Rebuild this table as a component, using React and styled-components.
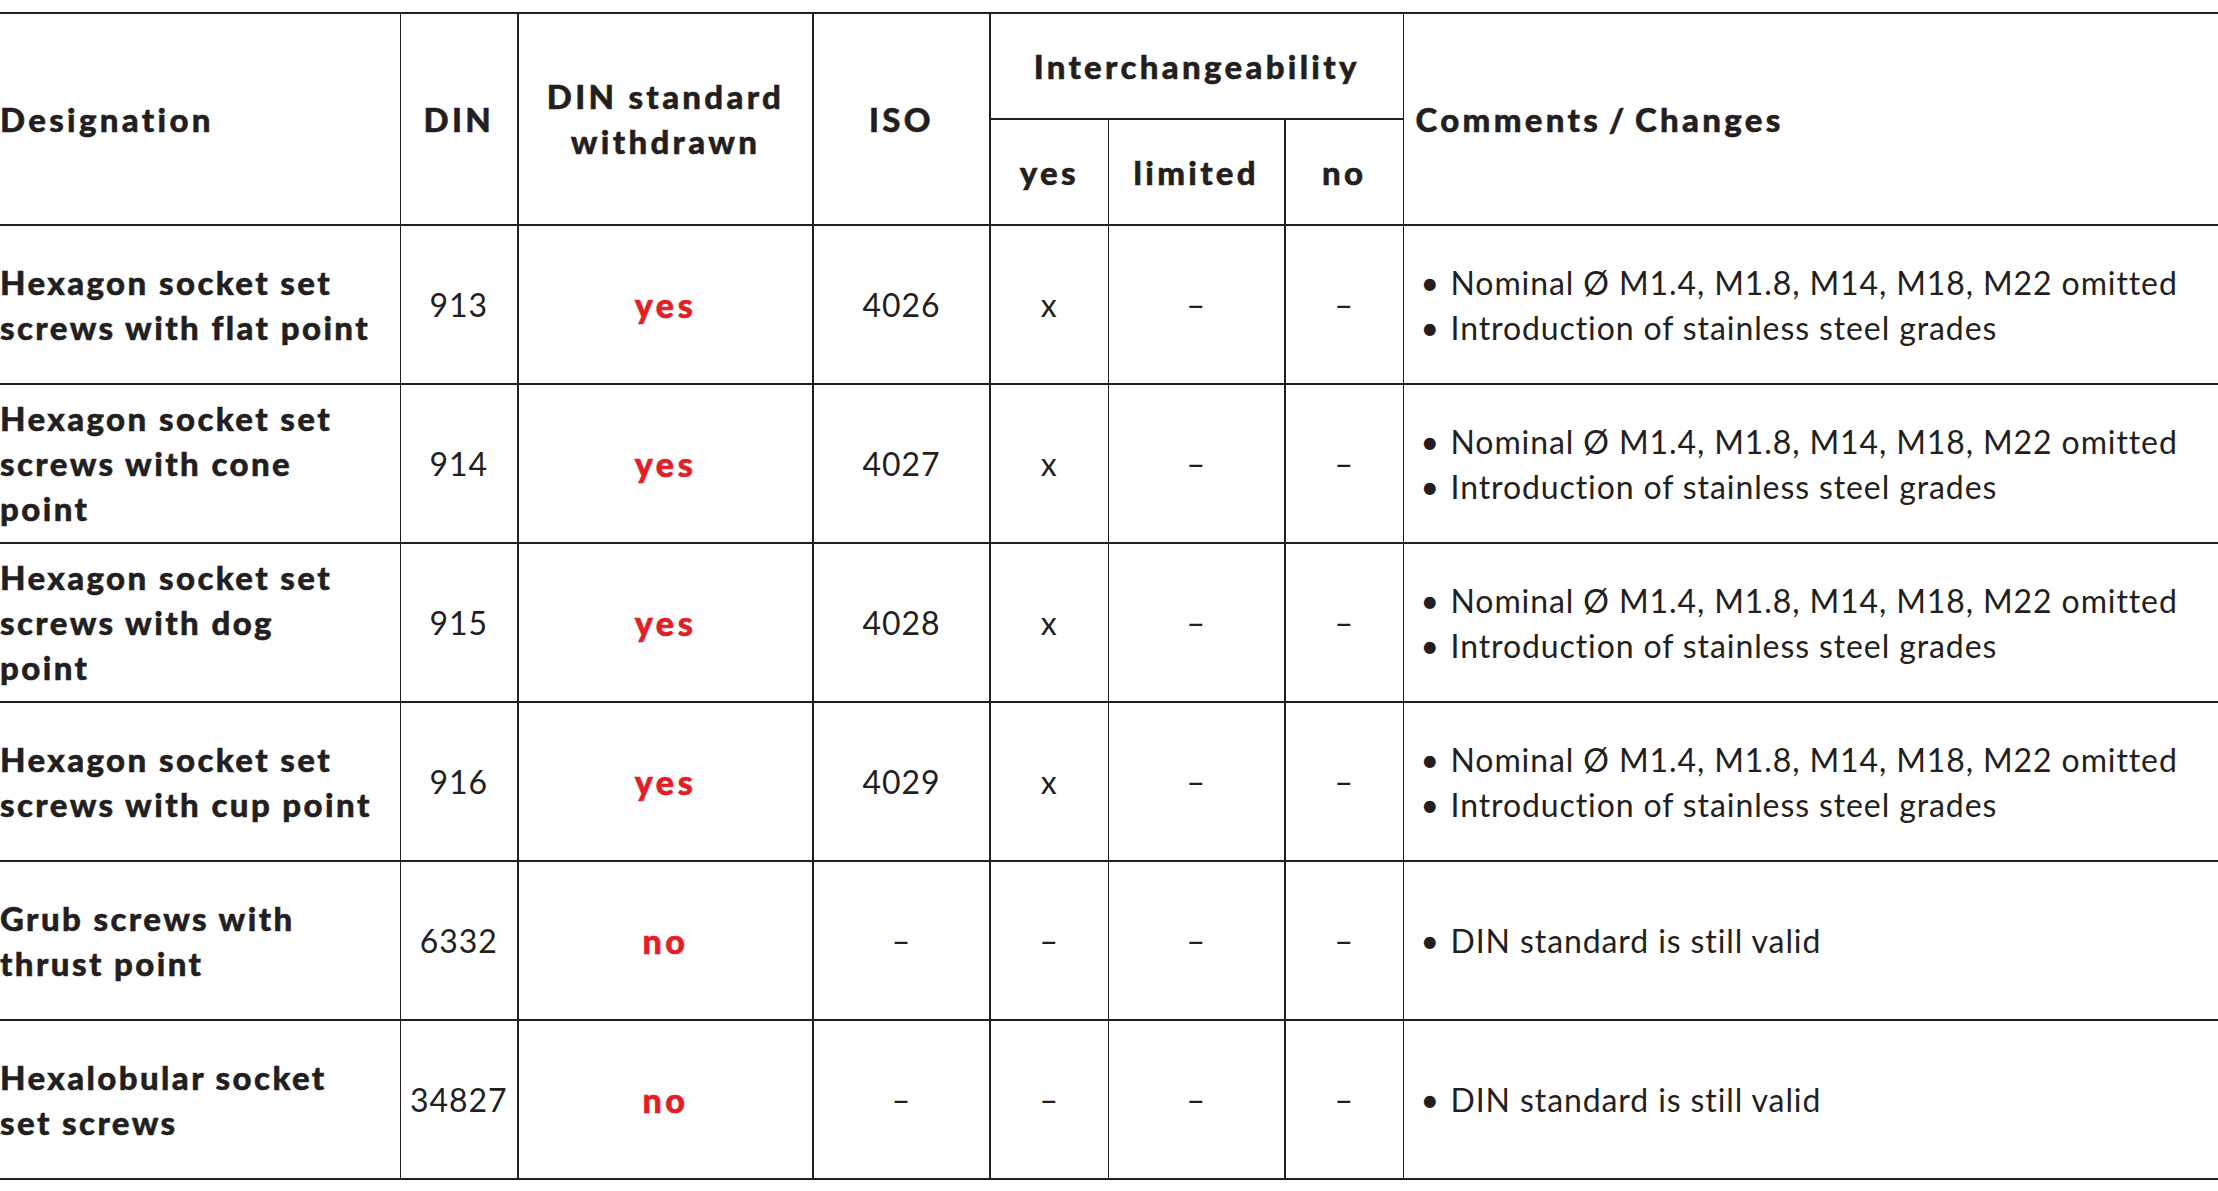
import React from 'react';
import styled, { createGlobalStyle } from 'styled-components';

const GlobalStyle = createGlobalStyle`
  html, body {
    margin: 0;
    padding: 0;
    background: #ffffff;
  }
  body {
    font-family: 'Lato', 'Noto Sans', sans-serif;
    color: #231f20;
  }
`;

const Page = styled.div`
  padding-top: 12px;
  width: 2218px;
`;

const Table = styled.table`
  width: 2218px;
  border-collapse: collapse;
  table-layout: fixed;
  border-top: 2px solid #231f20;
`;

const HeadRow = styled.tr`
  height: 106px;
`;

const BodyRow = styled.tr`
  height: 159px;
`;

const Th = styled.th`
  font-family: 'Lato', 'Noto Sans', sans-serif;
  font-weight: 900;
  font-size: 33px;
  letter-spacing: 3.3px;
  line-height: 45px;
  -webkit-text-stroke: 0.5px currentColor;
  color: #231f20;
  text-align: ${(p) => p.$align || 'center'};
  vertical-align: middle;
  padding: ${(p) => p.$pad || '0'};
  border-left: ${(p) => (p.$left ? `${p.$left}px solid #231f20` : 'none')};
  border-bottom: 2px solid #231f20;
`;

const Td = styled.td`
  font-family: 'Lato', 'Noto Sans', sans-serif;
  font-weight: 400;
  font-size: 32px;
  letter-spacing: 0.9px;
  line-height: 45px;
  color: #231f20;
  text-align: center;
  vertical-align: middle;
  padding: 0;
  border-left: ${(p) => (p.$left ? `${p.$left}px solid #231f20` : 'none')};
  border-bottom: 2px solid #231f20;
`;

const NameCell = styled(Td)`
  font-weight: 900;
  font-size: 33px;
  text-align: left;
  letter-spacing: 2.4px;
  -webkit-text-stroke: 0.5px currentColor;
`;

const FlagCell = styled(Td)`
  font-weight: 900;
  font-size: 34px;
  letter-spacing: 3.6px;
  -webkit-text-stroke: 0.6px currentColor;
  color: #e41e26;
`;

const CommentCell = styled(Td)`
  text-align: left;
  padding-left: 17px;
`;

const Bullets = styled.ul`
  list-style: none;
  margin: 0;
  padding: 0;
`;

const Bullet = styled.li`
  position: relative;
  padding-left: 30px;
  &::before {
    content: '•';
    position: absolute;
    left: 0;
    top: 0;
  }
`;

const nominal = [
  'Nominal Ø M1.4, M1.8, M14, M18, M22 omitted',
  'Introduction of stainless steel grades',
];
const valid = ['DIN standard is still valid'];

const rows = [
  { name: ['Hexagon socket set', 'screws with flat point'], din: '913', withdrawn: 'yes', iso: '4026', yes: 'x', comments: nominal },
  { name: ['Hexagon socket set', 'screws with cone', 'point'], din: '914', withdrawn: 'yes', iso: '4027', yes: 'x', comments: nominal },
  { name: ['Hexagon socket set', 'screws with dog', 'point'], din: '915', withdrawn: 'yes', iso: '4028', yes: 'x', comments: nominal },
  { name: ['Hexagon socket set', 'screws with cup point'], din: '916', withdrawn: 'yes', iso: '4029', yes: 'x', comments: nominal },
  { name: ['Grub screws with', 'thrust point'], din: '6332', withdrawn: 'no', iso: '–', yes: '–', comments: valid },
  { name: ['Hexalobular socket', 'set screws'], din: '34827', withdrawn: 'no', iso: '–', yes: '–', comments: valid },
];

const Lines = ({ lines }) =>
  lines.map((l, i) => (
    <React.Fragment key={i}>
      {i > 0 && <br />}
      {l}
    </React.Fragment>
  ));

export default function App() {
  return (
    <>
      <GlobalStyle />
      <Page>
        <Table>
          <colgroup>
            <col style={{ width: 400 }} />
            <col style={{ width: 118 }} />
            <col style={{ width: 295 }} />
            <col style={{ width: 177 }} />
            <col style={{ width: 118 }} />
            <col style={{ width: 177 }} />
            <col style={{ width: 118 }} />
            <col style={{ width: 815 }} />
          </colgroup>
          <thead>
            <HeadRow>
              <Th rowSpan={2} $align="left">Designation</Th>
              <Th rowSpan={2} $left={1}>DIN</Th>
              <Th rowSpan={2} $left={2}>
                DIN standard
                <br />
                withdrawn
              </Th>
              <Th rowSpan={2} $left={2}>ISO</Th>
              <Th colSpan={3} $left={2}>Interchangeability</Th>
              <Th rowSpan={2} $left={1} $align="left" $pad="0 0 0 12px">
                Comments{'\u2009/\u2009'}Changes
              </Th>
            </HeadRow>
            <HeadRow>
              <Th $left={2}>yes</Th>
              <Th $left={1}>limited</Th>
              <Th $left={2}>no</Th>
            </HeadRow>
          </thead>
          <tbody>
            {rows.map((r) => (
              <BodyRow key={r.din}>
                <NameCell>
                  <Lines lines={r.name} />
                </NameCell>
                <Td $left={1}>{r.din}</Td>
                <FlagCell $left={2}>{r.withdrawn}</FlagCell>
                <Td $left={2}>{r.iso}</Td>
                <Td $left={2}>{r.yes}</Td>
                <Td $left={1}>–</Td>
                <Td $left={2}>–</Td>
                <CommentCell $left={1}>
                  <Bullets>
                    {r.comments.map((c) => (
                      <Bullet key={c}>{c}</Bullet>
                    ))}
                  </Bullets>
                </CommentCell>
              </BodyRow>
            ))}
          </tbody>
        </Table>
      </Page>
    </>
  );
}
